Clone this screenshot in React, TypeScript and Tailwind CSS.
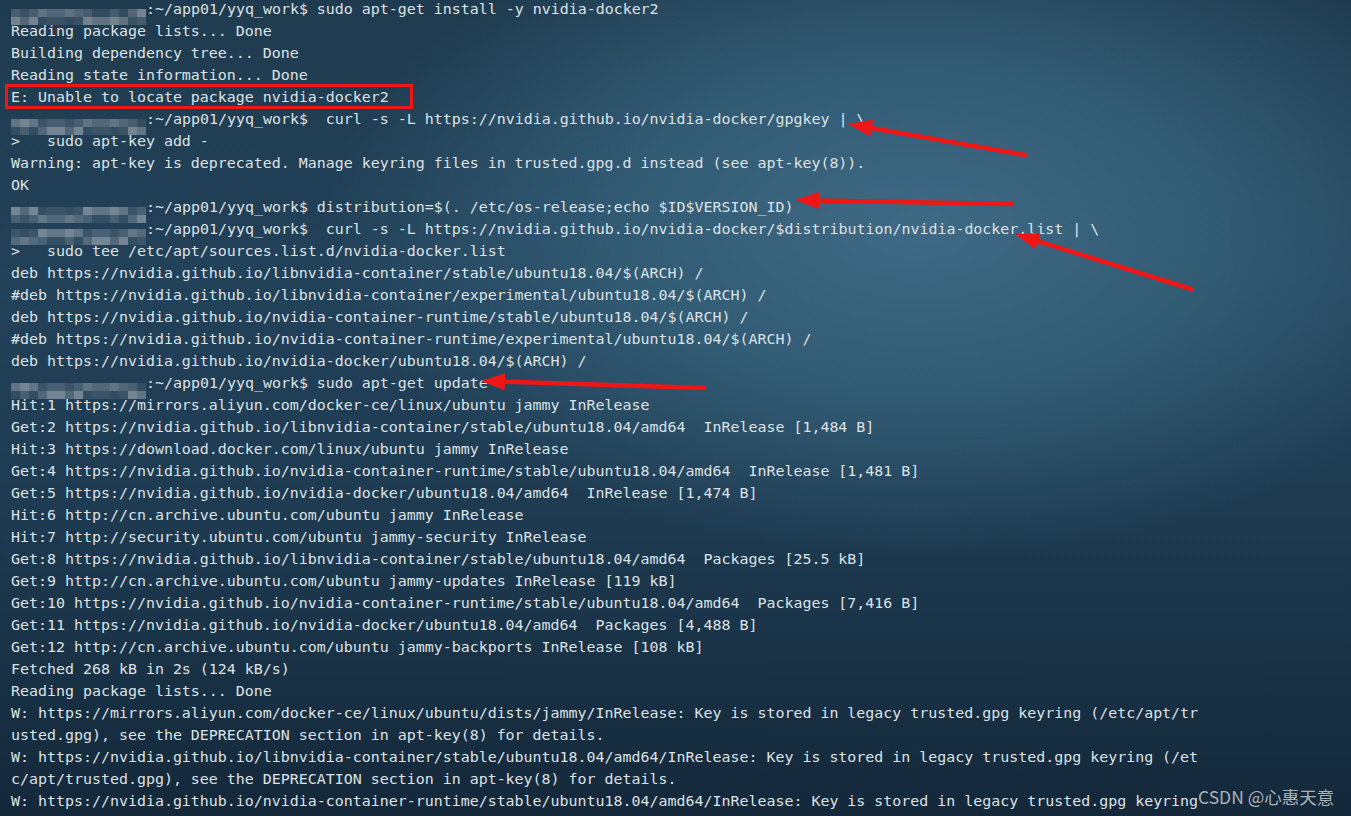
import React from "react";

type Line = { prompt?: boolean; text: string };

const lines: Line[] = [
  { prompt: true, text: ":~/app01/yyq_work$ sudo apt-get install -y nvidia-docker2" },
  { text: "Reading package lists... Done" },
  { text: "Building dependency tree... Done" },
  { text: "Reading state information... Done" },
  { text: "E: Unable to locate package nvidia-docker2" },
  { prompt: true, text: ":~/app01/yyq_work$  curl -s -L https://nvidia.github.io/nvidia-docker/gpgkey | \\" },
  { text: ">   sudo apt-key add -" },
  { text: "Warning: apt-key is deprecated. Manage keyring files in trusted.gpg.d instead (see apt-key(8))." },
  { text: "OK" },
  { prompt: true, text: ":~/app01/yyq_work$ distribution=$(. /etc/os-release;echo $ID$VERSION_ID)" },
  { prompt: true, text: ":~/app01/yyq_work$  curl -s -L https://nvidia.github.io/nvidia-docker/$distribution/nvidia-docker.list | \\" },
  { text: ">   sudo tee /etc/apt/sources.list.d/nvidia-docker.list" },
  { text: "deb https://nvidia.github.io/libnvidia-container/stable/ubuntu18.04/$(ARCH) /" },
  { text: "#deb https://nvidia.github.io/libnvidia-container/experimental/ubuntu18.04/$(ARCH) /" },
  { text: "deb https://nvidia.github.io/nvidia-container-runtime/stable/ubuntu18.04/$(ARCH) /" },
  { text: "#deb https://nvidia.github.io/nvidia-container-runtime/experimental/ubuntu18.04/$(ARCH) /" },
  { text: "deb https://nvidia.github.io/nvidia-docker/ubuntu18.04/$(ARCH) /" },
  { prompt: true, text: ":~/app01/yyq_work$ sudo apt-get update" },
  { text: "Hit:1 https://mirrors.aliyun.com/docker-ce/linux/ubuntu jammy InRelease" },
  { text: "Get:2 https://nvidia.github.io/libnvidia-container/stable/ubuntu18.04/amd64  InRelease [1,484 B]" },
  { text: "Hit:3 https://download.docker.com/linux/ubuntu jammy InRelease" },
  { text: "Get:4 https://nvidia.github.io/nvidia-container-runtime/stable/ubuntu18.04/amd64  InRelease [1,481 B]" },
  { text: "Get:5 https://nvidia.github.io/nvidia-docker/ubuntu18.04/amd64  InRelease [1,474 B]" },
  { text: "Hit:6 http://cn.archive.ubuntu.com/ubuntu jammy InRelease" },
  { text: "Hit:7 http://security.ubuntu.com/ubuntu jammy-security InRelease" },
  { text: "Get:8 https://nvidia.github.io/libnvidia-container/stable/ubuntu18.04/amd64  Packages [25.5 kB]" },
  { text: "Get:9 http://cn.archive.ubuntu.com/ubuntu jammy-updates InRelease [119 kB]" },
  { text: "Get:10 https://nvidia.github.io/nvidia-container-runtime/stable/ubuntu18.04/amd64  Packages [7,416 B]" },
  { text: "Get:11 https://nvidia.github.io/nvidia-docker/ubuntu18.04/amd64  Packages [4,488 B]" },
  { text: "Get:12 http://cn.archive.ubuntu.com/ubuntu jammy-backports InRelease [108 kB]" },
  { text: "Fetched 268 kB in 2s (124 kB/s)" },
  { text: "Reading package lists... Done" },
  { text: "W: https://mirrors.aliyun.com/docker-ce/linux/ubuntu/dists/jammy/InRelease: Key is stored in legacy trusted.gpg keyring (/etc/apt/tr" },
  { text: "usted.gpg), see the DEPRECATION section in apt-key(8) for details." },
  { text: "W: https://nvidia.github.io/libnvidia-container/stable/ubuntu18.04/amd64/InRelease: Key is stored in legacy trusted.gpg keyring (/et" },
  { text: "c/apt/trusted.gpg), see the DEPRECATION section in apt-key(8) for details." },
  { text: "W: https://nvidia.github.io/nvidia-container-runtime/stable/ubuntu18.04/amd64/InRelease: Key is stored in legacy trusted.gpg keyring" },
];

// mosaic tones for the hidden user@host part
const tones = [
  "rgba(150,160,170,0.34)",
  "rgba(170,176,184,0.48)",
  "rgba(128,140,152,0.28)",
  "rgba(185,190,196,0.55)",
  "rgba(118,130,144,0.22)",
  "rgba(160,166,174,0.40)",
];

function Mosaic({ seed }: { seed: number }) {
  const cells = Array.from({ length: 30 }, (_, i) => tones[(i * 7 + seed * 5 + ((i * i) % 5)) % tones.length]);
  return (
    <span className="inline-grid h-[16px] w-[135px] grid-cols-[repeat(15,9px)] grid-rows-[8px_8px] align-[-3px]">
      {cells.map((c, i) => (
        <span key={i} style={{ backgroundColor: c }} />
      ))}
    </span>
  );
}

const arrows = [
  { x1: 1025, y1: 155, x2: 848, y2: 124 },
  { x1: 1012, y1: 204, x2: 795, y2: 200 },
  { x1: 1191, y1: 289, x2: 1015, y2: 234 },
  { x1: 704, y1: 388, x2: 481, y2: 381 },
];

function Arrow({ x1, y1, x2, y2 }: { x1: number; y1: number; x2: number; y2: number }) {
  const len = Math.hypot(x2 - x1, y2 - y1);
  const ux = (x2 - x1) / len;
  const uy = (y2 - y1) / len;
  const bx = x2 - ux * 24;
  const by = y2 - uy * 24;
  const pts = `${x2},${y2} ${bx - uy * 8.5},${by + ux * 8.5} ${bx + uy * 8.5},${by - ux * 8.5}`;
  return (
    <g>
      <line x1={x1} y1={y1} x2={bx + ux * 2} y2={by + uy * 2} stroke="#f01616" strokeWidth={4.5} strokeLinecap="round" />
      <polygon points={pts} fill="#f01616" />
    </g>
  );
}

export default function App() {
  return (
    <div className="relative h-[816px] w-[1351px] overflow-hidden bg-[#1e3a4e] bg-[image:radial-gradient(ellipse_55%_50%_at_68%_28%,#3f6a85_0%,#325b74_40%,rgba(40,75,97,0)_80%),linear-gradient(180deg,#1f3b4f_0%,#22425a_35%,#1d3a50_65%,#14283a_100%)]">
      <div className="-mt-[2px] flex flex-col pl-[11px] font-['DejaVu_Sans_Mono','Liberation_Mono',monospace] text-[14.95px] leading-[22px] text-[#dde1e4] whitespace-pre">
        {lines.map((l, i) => (
          <div key={i} className="h-[22px]">
            {l.prompt && <Mosaic seed={i} />}
            {l.text}
          </div>
        ))}
      </div>

      {/* red annotation box */}
      <div className="pointer-events-none absolute left-[5px] top-[84px] h-[25px] w-[408px] border-[3px] border-[#f01616]" />

      <svg className="pointer-events-none absolute inset-0" width={1351} height={816}>
        {arrows.map((a, i) => (
          <Arrow key={i} {...a} />
        ))}
      </svg>

      <div className="pointer-events-none absolute left-[1198px] top-[785px] font-['Noto_Sans_CJK_SC','Noto_Sans',sans-serif] text-[17.5px] leading-[24px] text-[#d4d8dc]/80">
        CSDN @心惠天意
      </div>
    </div>
  );
}
